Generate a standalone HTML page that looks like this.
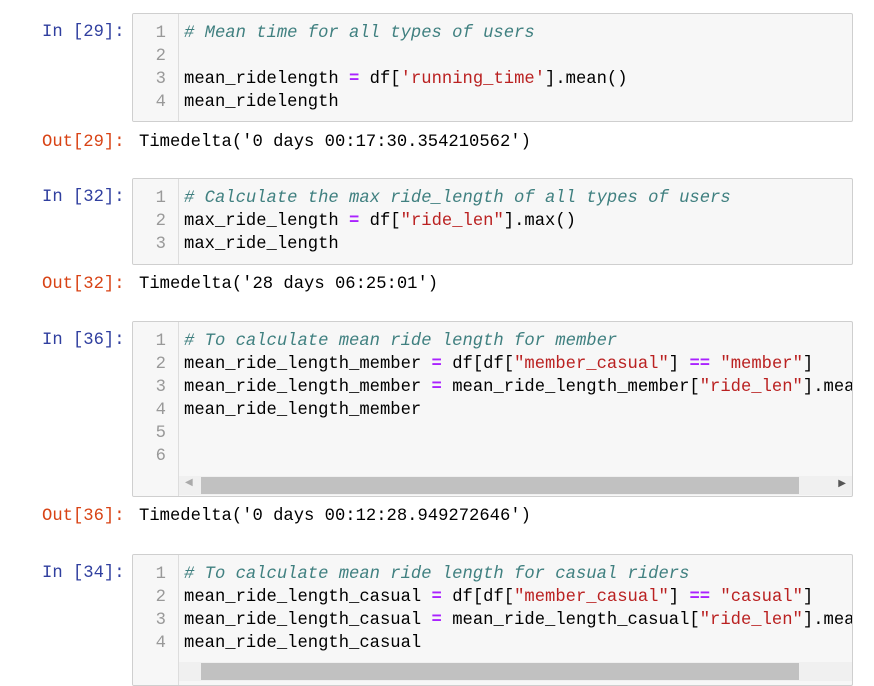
<!DOCTYPE html>
<html><head><style>
body{margin:0;width:874px;height:672px;background:#fff;position:relative;overflow:hidden;font-family:"Liberation Mono",monospace;font-size:17.2px;}
.p{position:absolute;white-space:pre;line-height:23px}
.in{color:#303F9F;left:42px}
.out{color:#D84315;left:42px}
.box{position:absolute;left:132px;width:719px;background:#f7f7f7;border:1px solid #cfcfcf;border-radius:2px;overflow:hidden}
.gut{position:absolute;left:0;top:0;bottom:0;width:45px;border-right:1px solid #ddd;background:#f7f7f7}
.n{position:absolute;left:0;width:33px;text-align:right;color:#999;white-space:pre;line-height:23px}
.c{position:absolute;left:51px;white-space:pre;line-height:23px;color:#000}
.cm{color:#408080;font-style:italic}
.s{color:#BA2121}
.o{color:#AA22FF;font-weight:bold}
.sb{position:absolute;left:46px;right:0;height:19px;background:#f0f0f0}
.th{position:absolute;left:22px;width:598px;top:1px;height:17px;background:#c1c1c1}
.res{position:absolute;left:139px;color:#000;white-space:pre;line-height:23px}
</style></head><body>

<div class="p in" style="top:21px">In [29]:</div>
<div class="box" style="top:13px;height:107px">
<div class="gut"></div>
<div class="n" style="top:8px">1<br>2<br>3<br>4</div>
<div class="c" style="top:8px"><span class="cm"># Mean time for all types of users</span>

mean_ridelength <span class="o">=</span> df[<span class="s">'running_time'</span>].mean()
mean_ridelength</div>
</div>
<div class="p out" style="top:131px">Out[29]:</div>
<div class="res" style="top:131px">Timedelta('0 days 00:17:30.354210562')</div>

<div class="p in" style="top:186px">In [32]:</div>
<div class="box" style="top:178px;height:85px">
<div class="gut"></div>
<div class="n" style="top:8px">1<br>2<br>3</div>
<div class="c" style="top:8px"><span class="cm"># Calculate the max ride_length of all types of users</span>
max_ride_length <span class="o">=</span> df[<span class="s">"ride_len"</span>].max()
max_ride_length</div>
</div>
<div class="p out" style="top:273px">Out[32]:</div>
<div class="res" style="top:273px">Timedelta('28 days 06:25:01')</div>

<div class="p in" style="top:329px">In [36]:</div>
<div class="box" style="top:321px;height:174px">
<div class="gut"></div>
<div class="n" style="top:8px">1<br>2<br>3<br>4<br>5<br>6</div>
<div class="c" style="top:8px"><span class="cm"># To calculate mean ride length for member</span>
mean_ride_length_member <span class="o">=</span> df[df[<span class="s">"member_casual"</span>] <span class="o">==</span> <span class="s">"member"</span>]
mean_ride_length_member <span class="o">=</span> mean_ride_length_member[<span class="s">"ride_len"</span>].mean()
mean_ride_length_member</div>
<div class="sb" style="top:154px"><div class="th"></div><span style="position:absolute;left:6px;top:1px;font-size:10px;color:#aaa">&#9664;</span><span style="position:absolute;right:6px;top:2px;font-size:10px;color:#555">&#9654;</span></div>
</div>
<div class="p out" style="top:505px">Out[36]:</div>
<div class="res" style="top:505px">Timedelta('0 days 00:12:28.949272646')</div>

<div class="p in" style="top:562px">In [34]:</div>
<div class="box" style="top:554px;height:130px">
<div class="gut"></div>
<div class="n" style="top:8px">1<br>2<br>3<br>4</div>
<div class="c" style="top:8px"><span class="cm"># To calculate mean ride length for casual riders</span>
mean_ride_length_casual <span class="o">=</span> df[df[<span class="s">"member_casual"</span>] <span class="o">==</span> <span class="s">"casual"</span>]
mean_ride_length_casual <span class="o">=</span> mean_ride_length_casual[<span class="s">"ride_len"</span>].mean()
mean_ride_length_casual</div>
<div class="sb" style="top:107px"><div class="th"></div></div>
</div>
</body></html>
